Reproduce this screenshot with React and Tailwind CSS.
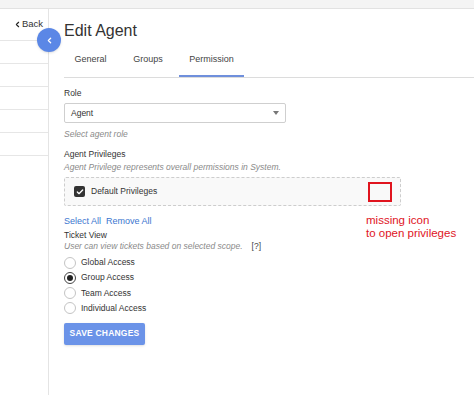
import { ChevronLeft, Check } from "lucide-react";

const radios = [
  { label: "Global Access", checked: false },
  { label: "Group Access", checked: true },
  { label: "Team Access", checked: false },
  { label: "Individual Access", checked: false },
];

function Radio({ label, checked }) {
  return (
    <label className="h-[15.2px] flex items-center gap-[5px]">
      <span
        className={`w-[12px] h-[12px] rounded-full border flex items-center justify-center bg-white ${
          checked ? "border-[#444]" : "border-[#c4c4c4]"
        }`}
      >
        {checked && <span className="w-[6px] h-[6px] rounded-full bg-[#222]" />}
      </span>
      <span className="text-[8.5px] text-[#333]">{label}</span>
    </label>
  );
}

export default function App() {
  return (
    <div
      className="w-[474px] h-[395px] bg-white flex flex-col overflow-hidden relative"
      style={{ fontFamily: '"Liberation Sans", Arial, sans-serif' }}
    >
      <div className="h-[9px] bg-[#f4f4f4] border-b border-[#e2e2e2] shrink-0" />

      <div className="flex flex-1 relative">
        {/* sidebar */}
        <div className="w-[49px] border-r border-[#e4e4e4] shrink-0 flex flex-col">
          <div className="h-[32px] border-b border-[#e6e6e6] flex items-center justify-end pr-[5px] text-[9.5px] text-[#333]">
            <ChevronLeft size={9} strokeWidth={3} className="text-[#222]" />
            <span>Back</span>
          </div>
          {[0, 1, 2, 3, 4].map((i) => (
            <div key={i} className="h-[23px] border-b border-[#e6e6e6]" />
          ))}
        </div>

        <div className="absolute left-[37px] top-[19px] w-[24px] h-[24px] rounded-full bg-[#5b87e6] flex items-center justify-center shadow-sm">
          <ChevronLeft size={9} strokeWidth={3.5} className="text-white" />
        </div>

        {/* content */}
        <div className="flex-1 pl-[15px] flex flex-col text-[#333]">
          <h1 className="mt-[13px] h-[18px] leading-[18px] text-[16px] text-[#333]">
            Edit Agent
          </h1>

          <div className="mt-[4px] h-[34px] border-b border-[#dcdcdc] flex gap-[5px] text-[9px] text-[#444]">
            <div className="w-[53px] flex items-center justify-center pb-[2px]">General</div>
            <div className="w-[52px] flex items-center justify-center pb-[2px]">Groups</div>
            <div className="w-[65px] flex items-center justify-center border-b-2 border-[#6f8fdc]">
              Permission
            </div>
          </div>

          <div className="mt-[9px] h-[12px] leading-[12px] text-[8.5px]">Role</div>

          <div className="mt-[4px] w-[222px] h-[20px] border border-[#cfcfcf] rounded-[2px] flex items-center justify-between pl-[6px] pr-[6px] text-[8.5px]">
            <span>Agent</span>
            <span className="w-0 h-0 border-l-[3.5px] border-r-[3.5px] border-t-[4px] border-l-transparent border-r-transparent border-t-[#777]" />
          </div>

          <div className="mt-[5px] h-[12px] leading-[12px] text-[8.5px] italic text-[#8a8a8a]">
            Select agent role
          </div>

          <div className="mt-[8px] h-[12px] leading-[12px] text-[8.5px]">Agent Privileges</div>
          <div className="mt-[1px] h-[12px] leading-[12px] text-[8.5px] italic text-[#8a8a8a]">
            Agent Privilege represents overall permissions in System.
          </div>

          <div className="mt-[4px] w-[337px] h-[29px] border border-dashed border-[#cdcdcd] rounded-[2px] bg-[#f9f9f9] flex items-center pl-[9px] pr-[8px]">
            <span className="w-[11px] h-[11px] rounded-[2px] bg-[#333] flex items-center justify-center">
              <Check size={8} strokeWidth={4} className="text-white" />
            </span>
            <span className="ml-[6px] text-[8.5px]">Default Privileges</span>
            <span className="ml-auto w-[24px] h-[20px] border-2 border-[#e0141e]" />
          </div>

          <div className="mt-[9px] h-[12px] leading-[12px] text-[9px] text-[#3b76cf] flex gap-[5px]">
            <span>Select All</span>
            <span>Remove All</span>
          </div>

          <div className="mt-[3px] h-[11px] leading-[11px] text-[8.5px]">Ticket View</div>
          <div className="h-[11px] leading-[11px] text-[8.5px] italic text-[#8a8a8a]">
            User can view tickets based on selected scope.
            <span className="not-italic text-[#444] ml-[9px]">[?]</span>
          </div>

          <div className="mt-[3px] flex flex-col">
            {radios.map((r) => (
              <Radio key={r.label} label={r.label} checked={r.checked} />
            ))}
          </div>

          <button className="mt-[7px] w-[81px] h-[22px] rounded-[2px] bg-[#6b93e8] text-white text-[8.5px] font-bold tracking-[0.2px] shadow-sm">
            SAVE CHANGES
          </button>
        </div>

        {/* annotation */}
        <div className="absolute left-[366px] top-[205px] text-[11.5px] leading-[13px] text-[#e0141e]">
          <div>missing icon</div>
          <div>to open privileges</div>
        </div>
      </div>
    </div>
  );
}
